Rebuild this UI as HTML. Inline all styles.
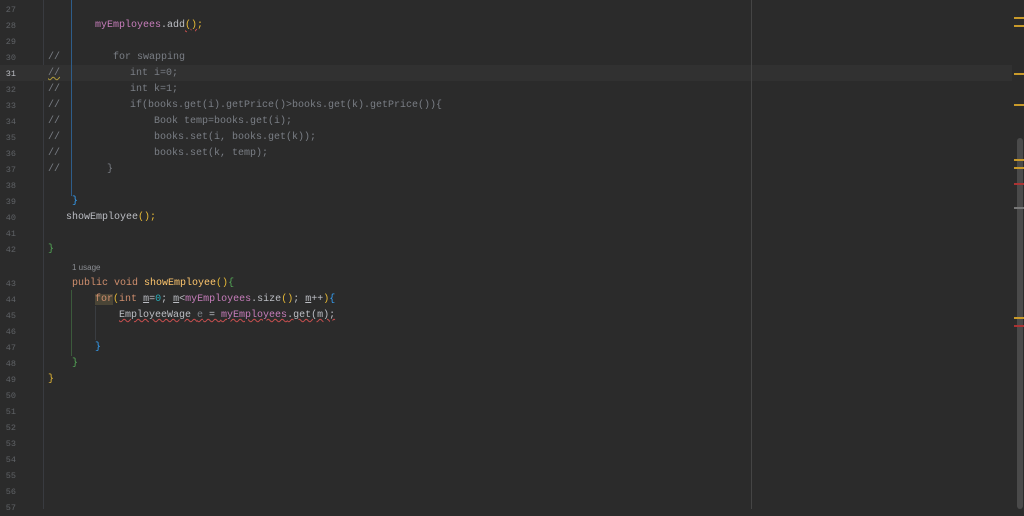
<!DOCTYPE html>
<html><head><style>
body{margin:0;width:1024px;height:509px;background:#2b2b2b;overflow:hidden;font-family:"Liberation Mono",monospace;font-size:10px;color:#bcbec4;position:relative}
.ln{position:absolute;left:0;width:16px;text-align:right;color:#5f6266;font-size:8.5px;line-height:16px;height:16px}
.c{position:absolute;white-space:pre;line-height:16px;height:16px}
.k{color:#cf8e6d}.m{color:#ffc66d}.p{color:#c77dbb}.cm{color:#7a7e85}.n{color:#2aacb8}.y{color:#e8ba36}.g{color:#54a857}.b{color:#359ff4}
.sq{text-decoration:underline wavy #c94f4f;text-decoration-thickness:1px}
.mk{position:absolute;left:1014px;width:10px;height:2px}
#w{position:absolute;left:0;top:2px;width:1024px;height:509px}
</style></head><body>
<div style="position:absolute;left:43px;top:0;width:1px;height:509px;background:#393b40"></div>
<div style="position:absolute;left:0;top:65px;width:1012px;height:16px;background:#313131"></div>
<div style="position:absolute;left:751px;top:0;width:1px;height:509px;background:#454545"></div>
<div style="position:absolute;left:71px;top:0;width:1px;height:196px;background:#2e5d8a"></div>
<div style="position:absolute;left:71px;top:290px;width:1px;height:66px;background:#3c5a3c"></div>
<div style="position:absolute;left:95px;top:306px;width:1px;height:34px;background:#3a3d41"></div>
<div style="position:absolute;left:1017px;top:138px;width:6px;height:371px;background:#4a4a4a;border-radius:3px"></div>
<div class="mk" style="top:17px;background:#c99a2a"></div>
<div class="mk" style="top:25px;background:#c99a2a"></div>
<div class="mk" style="top:73px;background:#c99a2a"></div>
<div class="mk" style="top:104px;background:#c99a2a"></div>
<div class="mk" style="top:159px;background:#c99a2a"></div>
<div class="mk" style="top:167px;background:#c99a2a"></div>
<div class="mk" style="top:183px;background:#a33"></div>
<div class="mk" style="top:207px;background:#777"></div>
<div class="mk" style="top:317px;background:#c99a2a"></div>
<div class="mk" style="top:325px;background:#a33"></div>
<div id="w">
<div class="ln" style="top:0">27</div>
<div class="ln" style="top:16px">28</div>
<div class="ln" style="top:32px">29</div>
<div class="ln" style="top:48px">30</div>
<div class="ln" style="top:64px;color:#bcbec4">31</div>
<div class="ln" style="top:80px">32</div>
<div class="ln" style="top:96px">33</div>
<div class="ln" style="top:112px">34</div>
<div class="ln" style="top:128px">35</div>
<div class="ln" style="top:144px">36</div>
<div class="ln" style="top:160px">37</div>
<div class="ln" style="top:176px">38</div>
<div class="ln" style="top:192px">39</div>
<div class="ln" style="top:208px">40</div>
<div class="ln" style="top:224px">41</div>
<div class="ln" style="top:240px">42</div>
<div class="ln" style="top:274px">43</div>
<div class="ln" style="top:290px">44</div>
<div class="ln" style="top:306px">45</div>
<div class="ln" style="top:322px">46</div>
<div class="ln" style="top:338px">47</div>
<div class="ln" style="top:354px">48</div>
<div class="ln" style="top:370px">49</div>
<div class="ln" style="top:386px">50</div>
<div class="ln" style="top:402px">51</div>
<div class="ln" style="top:418px">52</div>
<div class="ln" style="top:434px">53</div>
<div class="ln" style="top:450px">54</div>
<div class="ln" style="top:466px">55</div>
<div class="ln" style="top:482px">56</div>
<div class="ln" style="top:498px">57</div>

<div class="c" style="left:95px;top:16px"><span class="p">myEmployees</span>.add<span class="y sq">()</span><span class="y">;</span></div>
<div class="c cm" style="left:48px;top:48px">//</div><div class="c cm" style="left:113px;top:48px">for swapping</div>
<div class="c cm" style="left:48px;top:64px"><span style="text-decoration:underline wavy #b09a3a">//</span></div><div class="c cm" style="left:130px;top:64px">int i=0;</div>
<div class="c cm" style="left:48px;top:80px">//</div><div class="c cm" style="left:130px;top:80px">int k=1;</div>
<div class="c cm" style="left:48px;top:96px">//</div><div class="c cm" style="left:130px;top:96px">if(books.get(i).getPrice()&gt;books.get(k).getPrice()){</div>
<div class="c cm" style="left:48px;top:112px">//</div><div class="c cm" style="left:154px;top:112px">Book temp=books.get(i);</div>
<div class="c cm" style="left:48px;top:128px">//</div><div class="c cm" style="left:154px;top:128px">books.set(i, books.get(k));</div>
<div class="c cm" style="left:48px;top:144px">//</div><div class="c cm" style="left:154px;top:144px">books.set(k, temp);</div>
<div class="c cm" style="left:48px;top:160px">//</div><div class="c cm" style="left:107px;top:160px">}</div>
<div class="c b" style="left:72px;top:192px">}</div>
<div class="c" style="left:66px;top:208px">showEmployee<span class="y">();</span></div>
<div class="c g" style="left:48px;top:240px">}</div>
<div class="c" style="left:72px;top:258px;font-family:'Liberation Sans',sans-serif;font-size:8px;color:#8c8f94">1 usage</div>
<div class="c" style="left:72px;top:274px"><span class="k">public void</span> <span class="m">showEmployee</span><span class="y">()</span><span class="g">{</span></div>
<div class="c" style="left:95px;top:290px"><span class="k" style="background:#4a4536">for</span><span class="y">(</span><span class="k">int</span> <u>m</u>=<span class="n">0</span>; <u>m</u>&lt;<span class="p">myEmployees</span>.size<span class="y">()</span>; <u>m</u>++<span class="y">)</span><span class="b">{</span></div>
<div class="c" style="left:119px;top:306px"><span class="sq">EmployeeWage <span style="color:#7a7e85">e</span> = <span class="p">myEmployees</span>.get(m);</span></div>
<div class="c b" style="left:95px;top:338px">}</div>
<div class="c g" style="left:72px;top:354px">}</div>
<div class="c y" style="left:48px;top:370px">}</div>
</div>
</body></html>
